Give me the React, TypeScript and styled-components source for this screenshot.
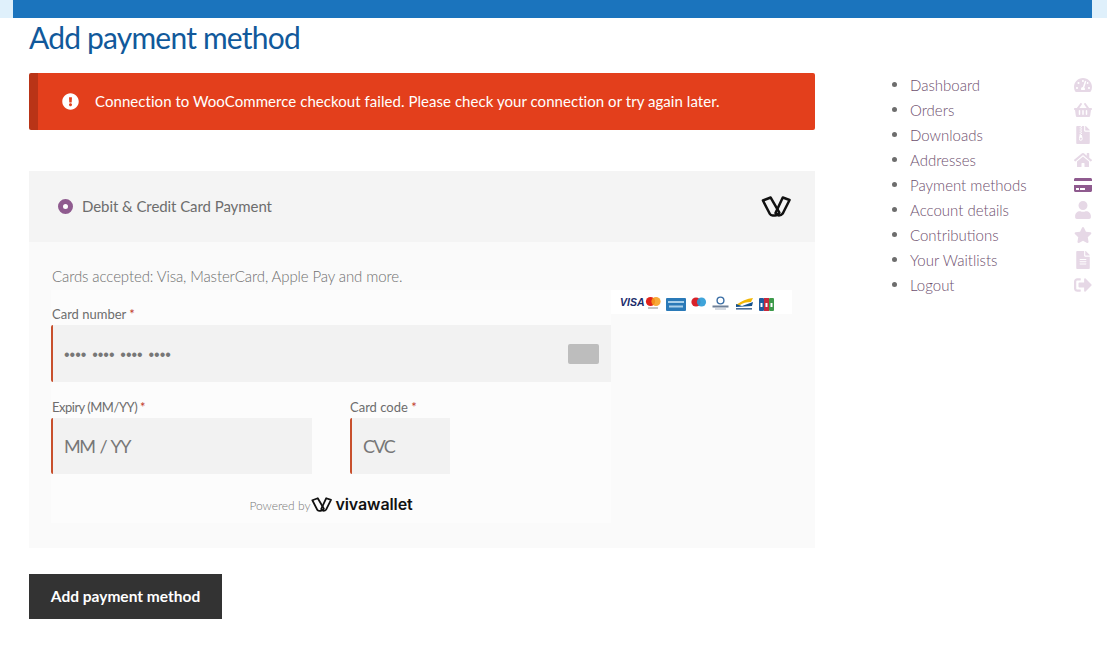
import React from "react";
import styled, { createGlobalStyle } from "styled-components";
import { FaTachometerAlt, FaShoppingBasket, FaFileArchive, FaHome, FaCreditCard, FaUser, FaStar, FaFileAlt, FaSignOutAlt, FaExclamationCircle } from "react-icons/fa";

const Global = createGlobalStyle`
  html, body { margin: 0; padding: 0; background: #fff; }
  body { font-family: Lato, "Open Sans", sans-serif; color: #6d6d6d; width: 1107px; height: 663px; overflow: hidden; }
  * { box-sizing: border-box; }
`;
const TopStrip = styled.div`
  background: #dff0fb;
  padding: 0 15px 0 13px;
  height: 18px;
`;
const TopBar = styled.div`
  background: #1b74bd;
  height: 18px;
`;
const Page = styled.div`
  display: flex;
  padding-left: 29px;
`;
const Main = styled.main`
  width: 786px;
`;
const Title = styled.h1`
  margin: 0;
  height: 55px;
  font-size: 30px;
  line-height: 38px;
  font-weight: 400;
  letter-spacing: -0.8px;
  color: #11599b;
`;
const Alert = styled.div`
  display: flex;
  align-items: center;
  height: 57px;
  background: #e33f1c;
  border-left: 9px solid #b93417;
  border-radius: 2px;
  padding-left: 24px;
  color: #fff;
  font-size: 15px;
  letter-spacing: 0.05px;
  svg { font-size: 17px; margin-right: 16px; }
`;
const AlertText = styled.span`
  margin-bottom: 1px;
`;
const Panel = styled.section`
  margin-top: 41px;
  height: 377px;
  background: #fafafa;
`;
const PanelHead = styled.div`
  height: 71px;
  background: #f4f4f4;
  display: flex;
  align-items: center;
  padding: 0 24px 0 29px;
  font-size: 15px;
  color: #6d6d6d;
`;
const Radio = styled.span`
  width: 15px;
  height: 15px;
  border-radius: 50%;
  border: 5px solid #8f5b8f;
  background: #fff;
  margin-right: 9px;
`;
const HeadLabel = styled.span`
  flex: 1;
  letter-spacing: -0.07px;
  margin-bottom: 1px;
`;
const PanelBody = styled.div`
  padding: 25px 0 0 22px;
`;
const Accepted = styled.p`
  margin: 0 0 3px;
  padding-left: 1px;
  height: 20px;
  line-height: 19px;
  font-size: 15px;
  font-weight: 300;
  color: #6f6f6f;
  letter-spacing: -0.11px;
`;
const FormRow = styled.div`
  display: flex;
  align-items: flex-start;
`;
const Form = styled.div`
  width: 560px;
  height: 233px;
  background: #fcfcfc;
  padding-top: 15px;
`;
const CardsStrip = styled.div`
  width: 181px;
  height: 24px;
  background: #fff;
  display: flex;
  align-items: center;
  padding-left: 9px;
`;
const Label = styled.label<{ $tight?: boolean; $flush?: boolean }>`
  display: block;
  height: 20px;
  padding-left: ${(p) => (p.$flush ? "0" : "1px")};
  font-size: 13px;
  line-height: 18px;
  color: #6d6d6d;
  letter-spacing: ${(p) => (p.$tight ? "-0.5px" : "0")};
  b { color: #c0392b; font-weight: 400; }
`;
const Input = styled.div<{ $w: string; $h: number }>`
  width: ${(p) => p.$w};
  height: ${(p) => p.$h}px;
  background: #f2f2f2;
  border-left: 2px solid #c8502d;
  border-radius: 2px 0 0 2px;
  display: flex;
  align-items: center;
  justify-content: space-between;
  padding: 0 12px 0 11px;
  font-size: 18px;
  letter-spacing: -1.5px;
  word-spacing: 2px;
  color: #777;
`;
const Dots = styled.span`
  font-family: "Liberation Sans", sans-serif;
  font-size: 16px;
  letter-spacing: 0;
  word-spacing: 1.3px;
  color: #777;
  margin-top: 2px;
`;
const ChipIcon = styled.span`
  width: 31px;
  height: 20px;
  background: #bdbdbd;
  border-radius: 2px;
`;
const Fields = styled.div`
  display: flex;
  margin-top: 16px;
  gap: 38px;
`;
const Powered = styled.div`
  display: flex;
  align-items: center;
  justify-content: center;
  margin-top: 20px;
  font-size: 12px;
  font-weight: 300;
  color: #777;
`;
const PoweredText = styled.span`
  margin: 3px 1px 0 0;
`;
const Wordmark = styled.span`
  font-family: Inter, sans-serif;
  font-size: 16px;
  font-weight: 600;
  color: #111;
  letter-spacing: -0.1px;
  margin-left: 3px;
`;
const Submit = styled.button`
  display: block;
  margin-top: 26px;
  width: 193px;
  height: 45px;
  background: #333;
  color: #fff;
  border: 0;
  font-family: inherit;
  font-size: 15.5px;
  font-weight: 700;
  padding: 0 0 2px;
`;
const Side = styled.nav`
  width: 277px;
  padding: 54px 0 0 77px;
`;
const MenuRow = styled.div`
  position: relative;
  display: flex;
  align-items: center;
  justify-content: space-between;
  height: 25px;
  padding-left: 18px;
  font-size: 15px;
  font-weight: 300;
  color: #6e4f6e;
  &::before {
    content: "";
    position: absolute;
    left: 0;
    top: 10px;
    width: 5px;
    height: 5px;
    border-radius: 50%;
    background: #6d6d6d;
  }
`;
const MenuIcon = styled.span<{ $active?: boolean }>`
  display: flex;
  justify-content: flex-end;
  font-size: 18px;
  color: ${(p) => (p.$active ? "#8f5b8f" : "#e6d8e6")};
`;

const VivaMark = ({ w, h }: { w: number; h: number }) => (
  <svg width={w} height={h} viewBox="6 6 31 21.5" fill="none" stroke="#111" strokeWidth="2.6" strokeLinejoin="round" style={{ display: "block" }}>
    <path d="M8 10.5 L16 7.5 L25 23 Q23 26 20.5 26 H18 Q16 26 15.2 24.5 Z" />
    <path d="M28.5 7.5 L35.5 10 L28.5 24 Q27 26 24.5 26 Q22.5 26 21 23.5 Z" />
  </svg>
);

const Cards = () => (
  <svg width="160" height="20" viewBox="0 0 160 20" style={{ display: "block" }}>
    <text x="0" y="13.5" fontFamily="Liberation Sans" fontStyle="italic" fontWeight="700" fontSize="10.5" fill="#1a2c6b">VISA</text>
    <circle cx="30.5" cy="9.5" r="4.6" fill="#e2231a" />
    <circle cx="36" cy="9.5" r="4.6" fill="#f79e1b" opacity="0.88" />
    <rect x="28" y="15.5" width="10" height="1" fill="#8a8a8a" />
    <rect x="46" y="6" width="20" height="13" rx="1" fill="#2a7ab8" />
    <rect x="48" y="9" width="16" height="2" fill="#a9d0ea" />
    <rect x="49" y="13.5" width="14" height="2" fill="#a9d0ea" />
    <circle cx="76" cy="10" r="4.6" fill="#d9222a" />
    <circle cx="81.5" cy="10" r="4.6" fill="#2a9ad6" opacity="0.9" />
    <circle cx="100.5" cy="8.5" r="3.4" fill="#fff" stroke="#3a6ea5" strokeWidth="1.4" />
    <rect x="92.5" y="13.5" width="16" height="2" fill="#6f8097" />
    <rect x="95" y="16.5" width="11" height="1" fill="#aab4c2" />
    <path d="M116 13 Q124 7 133 6 L131 10 Q124 10 120 13 Z" fill="#f2b705" />
    <path d="M116 12 L122 14 L133 10 L132 14 L116 15 Z" fill="#14508c" />
    <rect x="116" y="16" width="16" height="1.6" fill="#4a6d96" />
    <rect x="139" y="6" width="5" height="13" rx="1" fill="#1f5c9e" />
    <rect x="144" y="6" width="5" height="13" fill="#c5283d" />
    <rect x="149" y="6" width="5" height="13" rx="1" fill="#3d9a4a" />
    <rect x="140.5" y="11" width="2" height="4" fill="#fff" />
    <rect x="145.5" y="11" width="2" height="4" fill="#fff" />
    <rect x="150.5" y="11" width="2" height="4" fill="#fff" />
  </svg>
);

const menu: [string, React.ComponentType, boolean?][] = [
  ["Dashboard", FaTachometerAlt],
  ["Orders", FaShoppingBasket],
  ["Downloads", FaFileArchive],
  ["Addresses", FaHome],
  ["Payment methods", FaCreditCard, true],
  ["Account details", FaUser],
  ["Contributions", FaStar],
  ["Your Waitlists", FaFileAlt],
  ["Logout", FaSignOutAlt],
];

export default function App() {
  return (
    <>
      <Global />
      <TopStrip><TopBar /></TopStrip>
      <Page>
        <Main>
          <Title>Add payment method</Title>
          <Alert>
            <FaExclamationCircle />
            <AlertText>Connection to WooCommerce checkout failed. Please check your connection or try again later.</AlertText>
          </Alert>
          <Panel>
            <PanelHead>
              <Radio />
              <HeadLabel>Debit &amp; Credit Card Payment</HeadLabel>
              <VivaMark w={30} h={21} />
            </PanelHead>
            <PanelBody>
              <Accepted>Cards accepted: Visa, MasterCard, Apple Pay and more.</Accepted>
              <FormRow>
                <Form>
                  <Label>Card number <b>*</b></Label>
                  <Input $w="100%" $h={57}>
                    <Dots>•••• •••• •••• ••••</Dots>
                    <ChipIcon />
                  </Input>
                  <Fields>
                    <div>
                      <Label $tight>Expiry (MM/YY) <b>*</b></Label>
                      <Input $w="261px" $h={56}>MM / YY</Input>
                    </div>
                    <div>
                      <Label $flush>Card code <b>*</b></Label>
                      <Input $w="100px" $h={56}>CVC</Input>
                    </div>
                  </Fields>
                  <Powered>
                    <PoweredText>Powered by</PoweredText>
                    <VivaMark w={21} h={15} />
                    <Wordmark>vivawallet</Wordmark>
                  </Powered>
                </Form>
                <CardsStrip><Cards /></CardsStrip>
              </FormRow>
            </PanelBody>
          </Panel>
          <Submit>Add payment method</Submit>
        </Main>
        <Side>
          {menu.map(([label, Icon, active]) => (
            <MenuRow key={label}>
              <span>{label}</span>
              <MenuIcon $active={active}><Icon /></MenuIcon>
            </MenuRow>
          ))}
        </Side>
      </Page>
    </>
  );
}
